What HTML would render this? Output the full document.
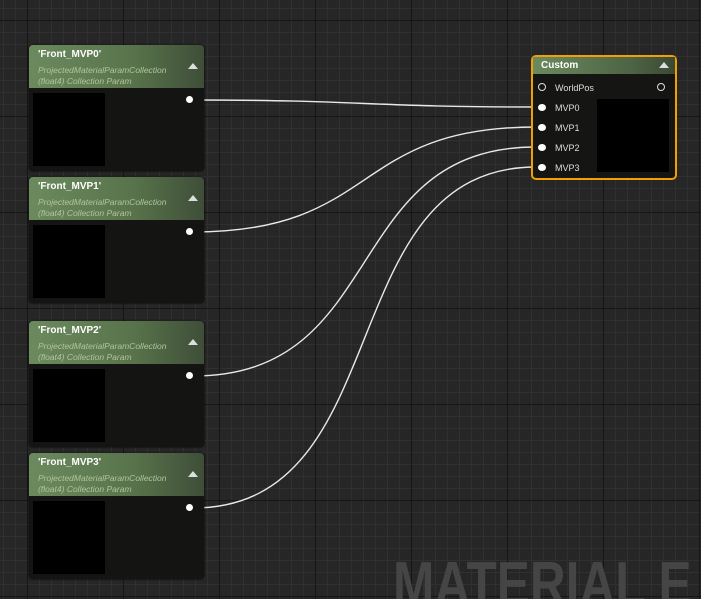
<!DOCTYPE html><html style="overflow:hidden"><head><style>
html,body{overflow:hidden;width:701px;height:599px}
body{margin:0;position:relative;font-family:"Liberation Sans",sans-serif;
background-color:#262626;
background-image:linear-gradient(to right,#161616 1px,transparent 1px),linear-gradient(to bottom,#161616 1px,transparent 1px),linear-gradient(to right,#303030 1px,transparent 1px),linear-gradient(to bottom,#303030 1px,transparent 1px);
background-size:96px 96px,96px 96px,12px 12px,12px 12px;
background-position:27px 20px,27px 20px,3px 8px,3px 8px;}
.wmw{position:absolute;left:0;top:0;width:701px;height:599px;overflow:hidden}
.wm{position:absolute;left:393px;top:554px;font-size:62px;font-weight:bold;color:#454545;white-space:nowrap;transform:scaleX(0.8);transform-origin:0 0;line-height:1}
.n{position:absolute;left:29px;width:175px;height:126px;background:#141513;border-radius:4px;box-shadow:0 0 2px #000;overflow:hidden}
.h{height:43px;background:linear-gradient(to right,#6b8a5e,#58734b 60%,#3e4e38);position:relative}
.t{position:absolute;left:9px;top:4px;font-size:10px;font-weight:bold;color:#fff}
.s{position:absolute;left:9px;top:20px;font-size:8.5px;font-style:italic;color:#b3c49c;line-height:11px}
.a{position:absolute;right:6px;top:18px;width:0;height:0;border-left:5px solid transparent;border-right:5px solid transparent;border-bottom:6px solid #ddd}
.p{position:absolute;left:4px;top:48px;width:72px;height:73px;background:#000}
.pin{position:absolute;left:157px;top:51px;width:7px;height:7px;border-radius:50%;background:#fff}
.c{position:absolute;left:531px;top:55px;width:142px;height:121px;border:2px solid #f0a000;border-radius:5px;background:#151614}
.ch{height:17px;background:linear-gradient(to right,#6b8a5e,#4d6344 70%,#3a4834);font-size:10px;font-weight:bold;color:#fff;padding:3px 0 0 8px;box-sizing:border-box;position:relative}
.r{position:absolute;left:22px;font-size:9px;color:#ddd}
.d{position:absolute;left:5px;width:8px;height:7px;border-radius:50%;background:#fff}
.o{position:absolute;width:6px;height:6px;border-radius:50%;border:1.3px solid #ddd}
</style></head><body>
<div class="wmw"><div class="wm">MATERIAL E</div></div>
<svg width="701" height="599" style="position:absolute;left:0;top:0" fill="none" stroke="#e8e8e8" stroke-width="1.4">
<path d="M193 100 C360 100 370 107 536 107"/>
<path d="M193 232 C380 232 350 127 536 127"/>
<path d="M193 376 C390 376 340 147 536 147"/>
<path d="M193 508 C400 508 330 167 536 167"/>
</svg>
<div class="n" style="top:45px"><div class="h"><div class="t">'Front_MVP0'</div><div class="s">ProjectedMaterialParamCollection<br>(float4) Collection Param</div><div class="a"></div></div><div class="p"></div><div class="pin"></div></div>
<div class="n" style="top:177px"><div class="h"><div class="t">'Front_MVP1'</div><div class="s">ProjectedMaterialParamCollection<br>(float4) Collection Param</div><div class="a"></div></div><div class="p"></div><div class="pin"></div></div>
<div class="n" style="top:321px"><div class="h"><div class="t">'Front_MVP2'</div><div class="s">ProjectedMaterialParamCollection<br>(float4) Collection Param</div><div class="a"></div></div><div class="p"></div><div class="pin"></div></div>
<div class="n" style="top:453px"><div class="h"><div class="t">'Front_MVP3'</div><div class="s">ProjectedMaterialParamCollection<br>(float4) Collection Param</div><div class="a"></div></div><div class="p"></div><div class="pin"></div></div>
<div class="c"><div class="ch">Custom<div class="a" style="top:5px;right:6px"></div></div>
<div class="o" style="left:5px;top:26px"></div><div class="r" style="top:26px">WorldPos</div><div class="o" style="left:124px;top:26px"></div>
<div class="d" style="top:47px"></div><div class="r" style="top:46px">MVP0</div>
<div class="d" style="top:67px"></div><div class="r" style="top:66px">MVP1</div>
<div class="d" style="top:87px"></div><div class="r" style="top:86px">MVP2</div>
<div class="d" style="top:107px"></div><div class="r" style="top:106px">MVP3</div>
<div style="position:absolute;left:64px;top:42px;width:72px;height:73px;background:#000"></div>
</div>
</body></html>
